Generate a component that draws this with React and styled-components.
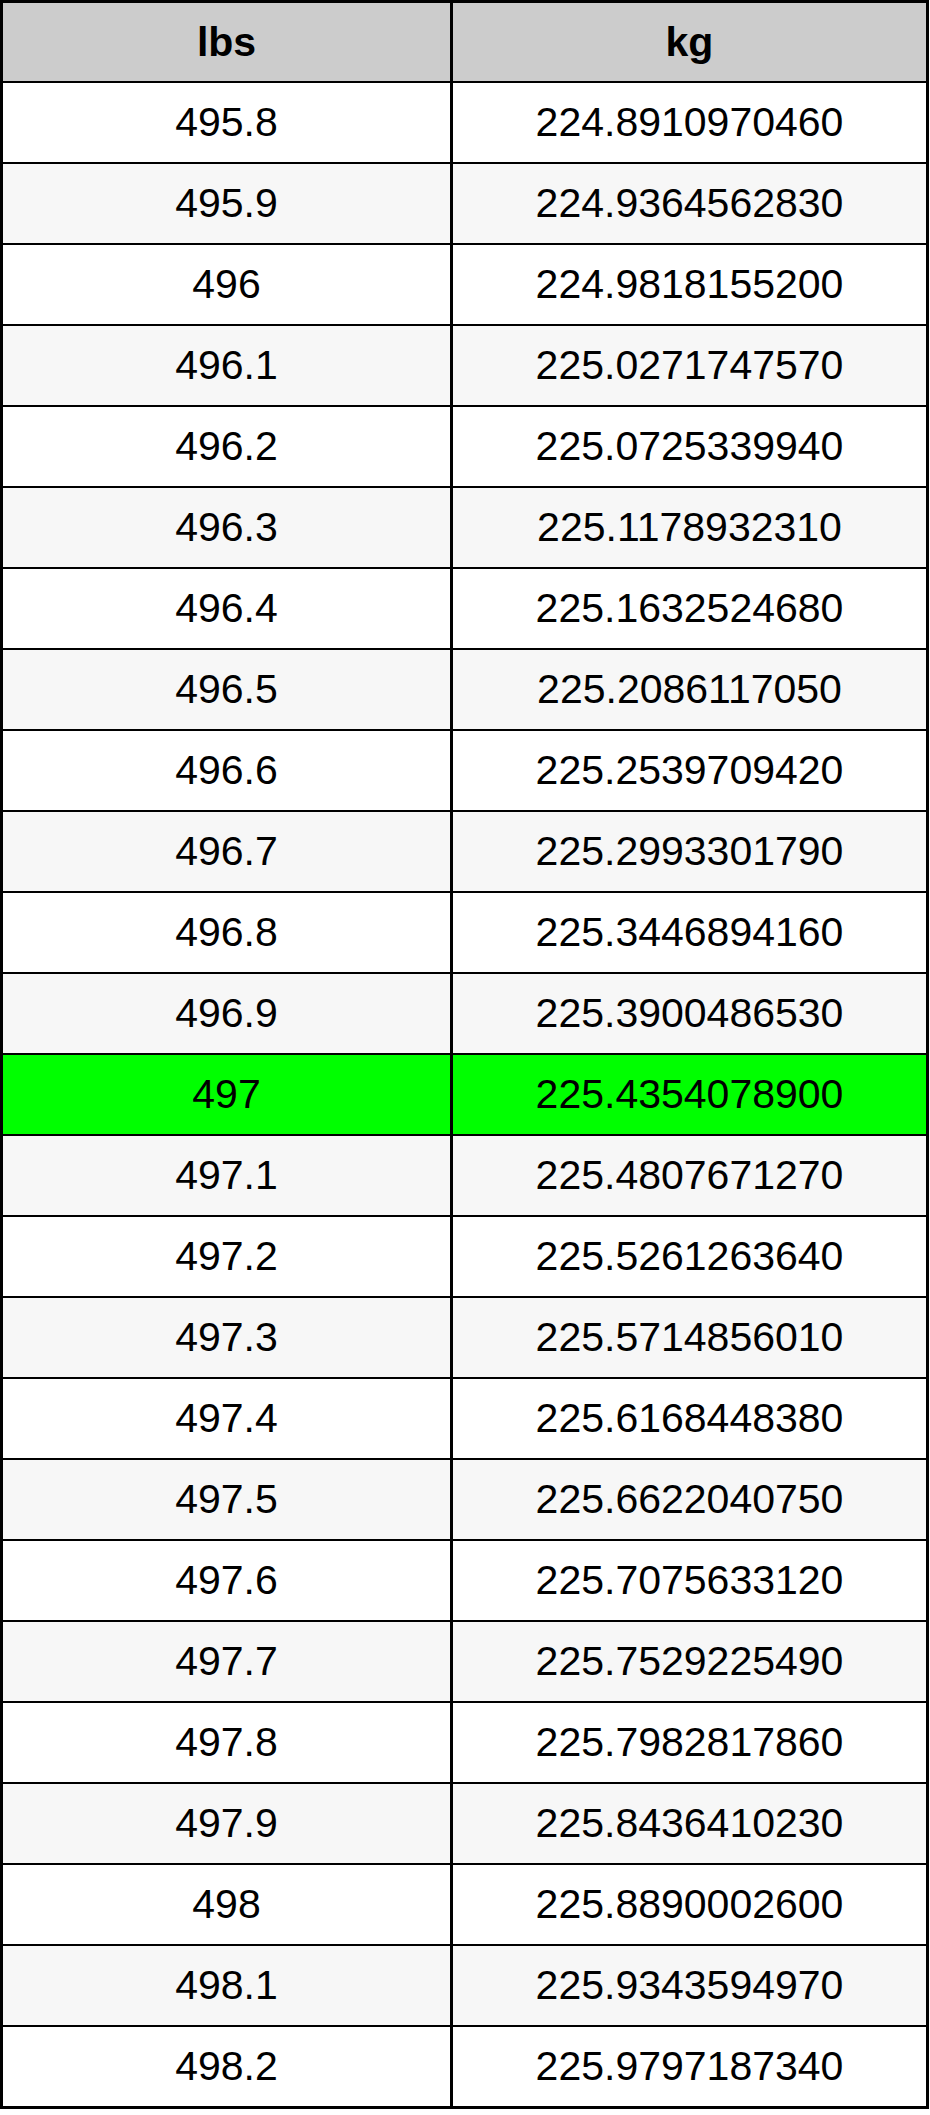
import React from "react";
import styled, { createGlobalStyle } from "styled-components";

const Global = createGlobalStyle`
  html, body { margin: 0; padding: 0; background: #fff; }
  body { font-family: "Liberation Sans", Arial, sans-serif; }
`;

const Table = styled.div`
  width: 929px;
  box-sizing: border-box;
  border: 3px solid #000;
  display: flex;
  flex-direction: column;
`;

const Row = styled.div`
  display: grid;
  grid-template-columns: 447px 1fr;
  height: ${(p) => (p.$header ? 78 : 79)}px;
  border-bottom: ${(p) => (p.$last ? "none" : "2px solid #000")};
  background: ${(p) =>
    p.$header ? "#cccccc" : p.$hl ? "#00ff00" : p.$alt ? "#f7f7f7" : "#ffffff"};
`;

const Cell = styled.div`
  display: flex;
  align-items: center;
  justify-content: center;
  color: #000;
  font-size: ${(p) => (p.$header ? "41px" : "41px")};
  font-weight: ${(p) => (p.$header ? 700 : 400)};
  padding-bottom: ${(p) => (p.$header ? "0" : "1px")};
  & + & {
    border-left: 3px solid #000;
  }
`;

const rows = [
  ["495.8", "224.8910970460"],
  ["495.9", "224.9364562830"],
  ["496", "224.9818155200"],
  ["496.1", "225.0271747570"],
  ["496.2", "225.0725339940"],
  ["496.3", "225.1178932310"],
  ["496.4", "225.1632524680"],
  ["496.5", "225.2086117050"],
  ["496.6", "225.2539709420"],
  ["496.7", "225.2993301790"],
  ["496.8", "225.3446894160"],
  ["496.9", "225.3900486530"],
  ["497", "225.4354078900"],
  ["497.1", "225.4807671270"],
  ["497.2", "225.5261263640"],
  ["497.3", "225.5714856010"],
  ["497.4", "225.6168448380"],
  ["497.5", "225.6622040750"],
  ["497.6", "225.7075633120"],
  ["497.7", "225.7529225490"],
  ["497.8", "225.7982817860"],
  ["497.9", "225.8436410230"],
  ["498", "225.8890002600"],
  ["498.1", "225.9343594970"],
  ["498.2", "225.9797187340"],
];

export default function App() {
  return (
    <>
      <Global />
      <Table>
        <Row $header>
          <Cell $header>lbs</Cell>
          <Cell $header>kg</Cell>
        </Row>
        {rows.map(([a, b], i) => (
          <Row
            key={a}
            $alt={i % 2 === 1}
            $hl={a === "497"}
            $last={i === rows.length - 1}
          >
            <Cell>{a}</Cell>
            <Cell>{b}</Cell>
          </Row>
        ))}
      </Table>
    </>
  );
}
